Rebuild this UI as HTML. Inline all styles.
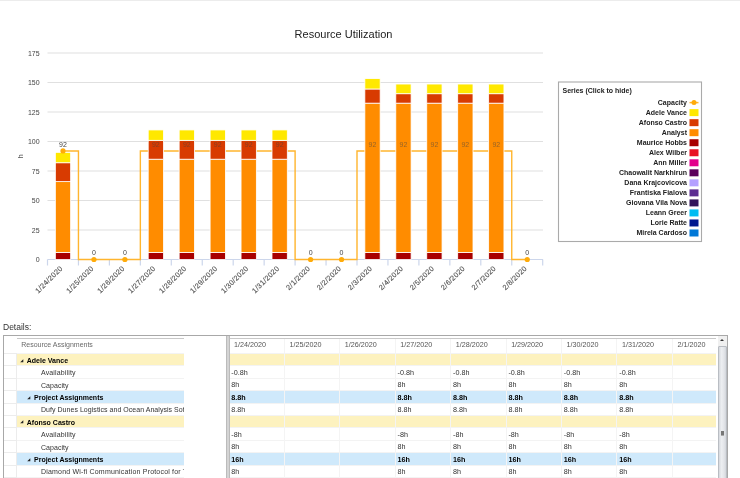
<!DOCTYPE html>
<html><head><meta charset="utf-8"><style>
html,body{margin:0;padding:0;background:#fff;width:740px;height:478px;overflow:hidden;position:relative}
</style></head><body><div style="position:absolute;left:0;top:0;width:740px;height:478px;will-change:transform;overflow:hidden">
<div style="position:absolute;left:0;top:0;width:740px;height:1px;background:#ececec"></div>
<svg width="740" height="300" style="position:absolute;left:0;top:0">
<line x1="47.5" x2="543" y1="230.00" y2="230.00" stroke="#e0e0e0" stroke-width="1.2"/>
<line x1="47.5" x2="543" y1="200.50" y2="200.50" stroke="#e0e0e0" stroke-width="1.2"/>
<line x1="47.5" x2="543" y1="171.00" y2="171.00" stroke="#e0e0e0" stroke-width="1.2"/>
<line x1="47.5" x2="543" y1="141.50" y2="141.50" stroke="#e0e0e0" stroke-width="1.2"/>
<line x1="47.5" x2="543" y1="112.00" y2="112.00" stroke="#e0e0e0" stroke-width="1.2"/>
<line x1="47.5" x2="543" y1="82.50" y2="82.50" stroke="#e0e0e0" stroke-width="1.2"/>
<line x1="47.5" x2="543" y1="53.00" y2="53.00" stroke="#e0e0e0" stroke-width="1.2"/>
<text x="39.6" y="262.20" text-anchor="end" font-family="'Liberation Sans', sans-serif" font-size="7" fill="#444">0</text>
<text x="39.6" y="232.70" text-anchor="end" font-family="'Liberation Sans', sans-serif" font-size="7" fill="#444">25</text>
<text x="39.6" y="203.20" text-anchor="end" font-family="'Liberation Sans', sans-serif" font-size="7" fill="#444">50</text>
<text x="39.6" y="173.70" text-anchor="end" font-family="'Liberation Sans', sans-serif" font-size="7" fill="#444">75</text>
<text x="39.6" y="144.20" text-anchor="end" font-family="'Liberation Sans', sans-serif" font-size="7" fill="#444">100</text>
<text x="39.6" y="114.70" text-anchor="end" font-family="'Liberation Sans', sans-serif" font-size="7" fill="#444">125</text>
<text x="39.6" y="85.20" text-anchor="end" font-family="'Liberation Sans', sans-serif" font-size="7" fill="#444">150</text>
<text x="39.6" y="55.70" text-anchor="end" font-family="'Liberation Sans', sans-serif" font-size="7" fill="#444">175</text>
<text x="0" y="0" transform="translate(22.6,156.3) rotate(-90)" text-anchor="middle" font-family="'Liberation Sans', sans-serif" font-size="7.6" fill="#555">h</text>
<text x="343.5" y="37.8" text-anchor="middle" font-family="'Liberation Sans', sans-serif" font-size="11" fill="#222">Resource Utilization</text>
<line x1="47.5" x2="543" y1="259.5" y2="259.5" stroke="#ccd6eb" stroke-width="1.2"/>
<line x1="47.50" x2="47.50" y1="259.5" y2="265.5" stroke="#ccd6eb" stroke-width="1.2"/>
<line x1="78.45" x2="78.45" y1="259.5" y2="265.5" stroke="#ccd6eb" stroke-width="1.2"/>
<line x1="109.40" x2="109.40" y1="259.5" y2="265.5" stroke="#ccd6eb" stroke-width="1.2"/>
<line x1="140.35" x2="140.35" y1="259.5" y2="265.5" stroke="#ccd6eb" stroke-width="1.2"/>
<line x1="171.30" x2="171.30" y1="259.5" y2="265.5" stroke="#ccd6eb" stroke-width="1.2"/>
<line x1="202.25" x2="202.25" y1="259.5" y2="265.5" stroke="#ccd6eb" stroke-width="1.2"/>
<line x1="233.20" x2="233.20" y1="259.5" y2="265.5" stroke="#ccd6eb" stroke-width="1.2"/>
<line x1="264.15" x2="264.15" y1="259.5" y2="265.5" stroke="#ccd6eb" stroke-width="1.2"/>
<line x1="295.10" x2="295.10" y1="259.5" y2="265.5" stroke="#ccd6eb" stroke-width="1.2"/>
<line x1="326.05" x2="326.05" y1="259.5" y2="265.5" stroke="#ccd6eb" stroke-width="1.2"/>
<line x1="357.00" x2="357.00" y1="259.5" y2="265.5" stroke="#ccd6eb" stroke-width="1.2"/>
<line x1="387.95" x2="387.95" y1="259.5" y2="265.5" stroke="#ccd6eb" stroke-width="1.2"/>
<line x1="418.90" x2="418.90" y1="259.5" y2="265.5" stroke="#ccd6eb" stroke-width="1.2"/>
<line x1="449.85" x2="449.85" y1="259.5" y2="265.5" stroke="#ccd6eb" stroke-width="1.2"/>
<line x1="480.80" x2="480.80" y1="259.5" y2="265.5" stroke="#ccd6eb" stroke-width="1.2"/>
<line x1="511.75" x2="511.75" y1="259.5" y2="265.5" stroke="#ccd6eb" stroke-width="1.2"/>
<line x1="542.70" x2="542.70" y1="259.5" y2="265.5" stroke="#ccd6eb" stroke-width="1.2"/>
<path d="M63.00 150.94 L78.45 150.94 L78.45 259.50 L109.40 259.50 L109.40 259.50 L140.35 259.50 L140.35 150.94 L171.30 150.94 L171.30 150.94 L202.25 150.94 L202.25 150.94 L233.20 150.94 L233.20 150.94 L264.15 150.94 L264.15 150.94 L295.10 150.94 L295.10 259.50 L326.05 259.50 L326.05 259.50 L357.00 259.50 L357.00 150.94 L387.95 150.94 L387.95 150.94 L418.90 150.94 L418.90 150.94 L449.85 150.94 L449.85 150.94 L480.80 150.94 L480.80 150.94 L511.75 150.94 L511.75 259.50 L527.25 259.50" fill="none" stroke="#ffb52e" stroke-width="1.4"/>
<rect x="55.35" y="252.42" width="15.3" height="7.08" fill="#a80000" stroke="#fff" stroke-width="0.8"/>
<rect x="55.35" y="181.62" width="15.3" height="70.80" fill="#ff8c00" stroke="#fff" stroke-width="0.8"/>
<rect x="55.35" y="162.74" width="15.3" height="18.88" fill="#d83b01" stroke="#fff" stroke-width="0.8"/>
<rect x="55.35" y="152.36" width="15.3" height="10.38" fill="#ffe800" stroke="#fff" stroke-width="0.8"/>
<rect x="148.20" y="252.42" width="15.3" height="7.08" fill="#a80000" stroke="#fff" stroke-width="0.8"/>
<rect x="148.20" y="159.20" width="15.3" height="93.22" fill="#ff8c00" stroke="#fff" stroke-width="0.8"/>
<rect x="148.20" y="140.32" width="15.3" height="18.88" fill="#d83b01" stroke="#fff" stroke-width="0.8"/>
<rect x="148.20" y="129.94" width="15.3" height="10.38" fill="#ffe800" stroke="#fff" stroke-width="0.8"/>
<rect x="179.15" y="252.42" width="15.3" height="7.08" fill="#a80000" stroke="#fff" stroke-width="0.8"/>
<rect x="179.15" y="159.20" width="15.3" height="93.22" fill="#ff8c00" stroke="#fff" stroke-width="0.8"/>
<rect x="179.15" y="140.32" width="15.3" height="18.88" fill="#d83b01" stroke="#fff" stroke-width="0.8"/>
<rect x="179.15" y="129.94" width="15.3" height="10.38" fill="#ffe800" stroke="#fff" stroke-width="0.8"/>
<rect x="210.10" y="252.42" width="15.3" height="7.08" fill="#a80000" stroke="#fff" stroke-width="0.8"/>
<rect x="210.10" y="159.20" width="15.3" height="93.22" fill="#ff8c00" stroke="#fff" stroke-width="0.8"/>
<rect x="210.10" y="140.32" width="15.3" height="18.88" fill="#d83b01" stroke="#fff" stroke-width="0.8"/>
<rect x="210.10" y="129.94" width="15.3" height="10.38" fill="#ffe800" stroke="#fff" stroke-width="0.8"/>
<rect x="241.05" y="252.42" width="15.3" height="7.08" fill="#a80000" stroke="#fff" stroke-width="0.8"/>
<rect x="241.05" y="159.20" width="15.3" height="93.22" fill="#ff8c00" stroke="#fff" stroke-width="0.8"/>
<rect x="241.05" y="140.32" width="15.3" height="18.88" fill="#d83b01" stroke="#fff" stroke-width="0.8"/>
<rect x="241.05" y="129.94" width="15.3" height="10.38" fill="#ffe800" stroke="#fff" stroke-width="0.8"/>
<rect x="272.00" y="252.42" width="15.3" height="7.08" fill="#a80000" stroke="#fff" stroke-width="0.8"/>
<rect x="272.00" y="159.20" width="15.3" height="93.22" fill="#ff8c00" stroke="#fff" stroke-width="0.8"/>
<rect x="272.00" y="140.32" width="15.3" height="18.88" fill="#d83b01" stroke="#fff" stroke-width="0.8"/>
<rect x="272.00" y="129.94" width="15.3" height="10.38" fill="#ffe800" stroke="#fff" stroke-width="0.8"/>
<rect x="364.85" y="252.42" width="15.3" height="7.08" fill="#a80000" stroke="#fff" stroke-width="0.8"/>
<rect x="364.85" y="103.15" width="15.3" height="149.27" fill="#ff8c00" stroke="#fff" stroke-width="0.8"/>
<rect x="364.85" y="88.99" width="15.3" height="14.16" fill="#d83b01" stroke="#fff" stroke-width="0.8"/>
<rect x="364.85" y="78.61" width="15.3" height="10.38" fill="#ffe800" stroke="#fff" stroke-width="0.8"/>
<rect x="395.80" y="252.42" width="15.3" height="7.08" fill="#a80000" stroke="#fff" stroke-width="0.8"/>
<rect x="395.80" y="103.15" width="15.3" height="149.27" fill="#ff8c00" stroke="#fff" stroke-width="0.8"/>
<rect x="395.80" y="93.71" width="15.3" height="9.44" fill="#d83b01" stroke="#fff" stroke-width="0.8"/>
<rect x="395.80" y="84.03" width="15.3" height="9.68" fill="#ffe800" stroke="#fff" stroke-width="0.8"/>
<rect x="426.75" y="252.42" width="15.3" height="7.08" fill="#a80000" stroke="#fff" stroke-width="0.8"/>
<rect x="426.75" y="103.15" width="15.3" height="149.27" fill="#ff8c00" stroke="#fff" stroke-width="0.8"/>
<rect x="426.75" y="93.71" width="15.3" height="9.44" fill="#d83b01" stroke="#fff" stroke-width="0.8"/>
<rect x="426.75" y="84.03" width="15.3" height="9.68" fill="#ffe800" stroke="#fff" stroke-width="0.8"/>
<rect x="457.70" y="252.42" width="15.3" height="7.08" fill="#a80000" stroke="#fff" stroke-width="0.8"/>
<rect x="457.70" y="103.15" width="15.3" height="149.27" fill="#ff8c00" stroke="#fff" stroke-width="0.8"/>
<rect x="457.70" y="93.71" width="15.3" height="9.44" fill="#d83b01" stroke="#fff" stroke-width="0.8"/>
<rect x="457.70" y="84.03" width="15.3" height="9.68" fill="#ffe800" stroke="#fff" stroke-width="0.8"/>
<rect x="488.65" y="252.42" width="15.3" height="7.08" fill="#a80000" stroke="#fff" stroke-width="0.8"/>
<rect x="488.65" y="103.15" width="15.3" height="149.27" fill="#ff8c00" stroke="#fff" stroke-width="0.8"/>
<rect x="488.65" y="93.71" width="15.3" height="9.44" fill="#d83b01" stroke="#fff" stroke-width="0.8"/>
<rect x="488.65" y="84.03" width="15.3" height="9.68" fill="#ffe800" stroke="#fff" stroke-width="0.8"/>
<circle cx="63.00" cy="150.94" r="2.6" fill="#ffab0a"/>
<circle cx="93.95" cy="259.50" r="2.6" fill="#ffab0a"/>
<circle cx="124.90" cy="259.50" r="2.6" fill="#ffab0a"/>
<circle cx="310.60" cy="259.50" r="2.6" fill="#ffab0a"/>
<circle cx="341.55" cy="259.50" r="2.6" fill="#ffab0a"/>
<circle cx="527.25" cy="259.50" r="2.6" fill="#ffab0a"/>
<text x="63.00" y="146.74" text-anchor="middle" font-family="'Liberation Sans', sans-serif" font-size="7" fill="#444" fill-opacity="1">92</text>
<text x="93.95" y="255.30" text-anchor="middle" font-family="'Liberation Sans', sans-serif" font-size="7" fill="#444" fill-opacity="1">0</text>
<text x="124.90" y="255.30" text-anchor="middle" font-family="'Liberation Sans', sans-serif" font-size="7" fill="#444" fill-opacity="1">0</text>
<text x="155.85" y="146.74" text-anchor="middle" font-family="'Liberation Sans', sans-serif" font-size="7" fill="#444" fill-opacity="0.55">92</text>
<text x="186.80" y="146.74" text-anchor="middle" font-family="'Liberation Sans', sans-serif" font-size="7" fill="#444" fill-opacity="0.55">92</text>
<text x="217.75" y="146.74" text-anchor="middle" font-family="'Liberation Sans', sans-serif" font-size="7" fill="#444" fill-opacity="0.55">92</text>
<text x="248.70" y="146.74" text-anchor="middle" font-family="'Liberation Sans', sans-serif" font-size="7" fill="#444" fill-opacity="0.55">92</text>
<text x="279.65" y="146.74" text-anchor="middle" font-family="'Liberation Sans', sans-serif" font-size="7" fill="#444" fill-opacity="0.55">92</text>
<text x="310.60" y="255.30" text-anchor="middle" font-family="'Liberation Sans', sans-serif" font-size="7" fill="#444" fill-opacity="1">0</text>
<text x="341.55" y="255.30" text-anchor="middle" font-family="'Liberation Sans', sans-serif" font-size="7" fill="#444" fill-opacity="1">0</text>
<text x="372.50" y="146.74" text-anchor="middle" font-family="'Liberation Sans', sans-serif" font-size="7" fill="#444" fill-opacity="0.55">92</text>
<text x="403.45" y="146.74" text-anchor="middle" font-family="'Liberation Sans', sans-serif" font-size="7" fill="#444" fill-opacity="0.55">92</text>
<text x="434.40" y="146.74" text-anchor="middle" font-family="'Liberation Sans', sans-serif" font-size="7" fill="#444" fill-opacity="0.55">92</text>
<text x="465.35" y="146.74" text-anchor="middle" font-family="'Liberation Sans', sans-serif" font-size="7" fill="#444" fill-opacity="0.55">92</text>
<text x="496.30" y="146.74" text-anchor="middle" font-family="'Liberation Sans', sans-serif" font-size="7" fill="#444" fill-opacity="0.55">92</text>
<text x="527.25" y="255.30" text-anchor="middle" font-family="'Liberation Sans', sans-serif" font-size="7" fill="#444" fill-opacity="1">0</text>
<text x="0" y="0" transform="translate(63.10,268.80) rotate(-45)" text-anchor="end" font-family="'Liberation Sans', sans-serif" font-size="7.3" letter-spacing="0.3" fill="#555" stroke="#555" stroke-width="0.15">1/24/2020</text>
<text x="0" y="0" transform="translate(94.05,268.80) rotate(-45)" text-anchor="end" font-family="'Liberation Sans', sans-serif" font-size="7.3" letter-spacing="0.3" fill="#555" stroke="#555" stroke-width="0.15">1/25/2020</text>
<text x="0" y="0" transform="translate(125.00,268.80) rotate(-45)" text-anchor="end" font-family="'Liberation Sans', sans-serif" font-size="7.3" letter-spacing="0.3" fill="#555" stroke="#555" stroke-width="0.15">1/26/2020</text>
<text x="0" y="0" transform="translate(155.95,268.80) rotate(-45)" text-anchor="end" font-family="'Liberation Sans', sans-serif" font-size="7.3" letter-spacing="0.3" fill="#555" stroke="#555" stroke-width="0.15">1/27/2020</text>
<text x="0" y="0" transform="translate(186.90,268.80) rotate(-45)" text-anchor="end" font-family="'Liberation Sans', sans-serif" font-size="7.3" letter-spacing="0.3" fill="#555" stroke="#555" stroke-width="0.15">1/28/2020</text>
<text x="0" y="0" transform="translate(217.85,268.80) rotate(-45)" text-anchor="end" font-family="'Liberation Sans', sans-serif" font-size="7.3" letter-spacing="0.3" fill="#555" stroke="#555" stroke-width="0.15">1/29/2020</text>
<text x="0" y="0" transform="translate(248.80,268.80) rotate(-45)" text-anchor="end" font-family="'Liberation Sans', sans-serif" font-size="7.3" letter-spacing="0.3" fill="#555" stroke="#555" stroke-width="0.15">1/30/2020</text>
<text x="0" y="0" transform="translate(279.75,268.80) rotate(-45)" text-anchor="end" font-family="'Liberation Sans', sans-serif" font-size="7.3" letter-spacing="0.3" fill="#555" stroke="#555" stroke-width="0.15">1/31/2020</text>
<text x="0" y="0" transform="translate(310.70,268.80) rotate(-45)" text-anchor="end" font-family="'Liberation Sans', sans-serif" font-size="7.3" letter-spacing="0.3" fill="#555" stroke="#555" stroke-width="0.15">2/1/2020</text>
<text x="0" y="0" transform="translate(341.65,268.80) rotate(-45)" text-anchor="end" font-family="'Liberation Sans', sans-serif" font-size="7.3" letter-spacing="0.3" fill="#555" stroke="#555" stroke-width="0.15">2/2/2020</text>
<text x="0" y="0" transform="translate(372.60,268.80) rotate(-45)" text-anchor="end" font-family="'Liberation Sans', sans-serif" font-size="7.3" letter-spacing="0.3" fill="#555" stroke="#555" stroke-width="0.15">2/3/2020</text>
<text x="0" y="0" transform="translate(403.55,268.80) rotate(-45)" text-anchor="end" font-family="'Liberation Sans', sans-serif" font-size="7.3" letter-spacing="0.3" fill="#555" stroke="#555" stroke-width="0.15">2/4/2020</text>
<text x="0" y="0" transform="translate(434.50,268.80) rotate(-45)" text-anchor="end" font-family="'Liberation Sans', sans-serif" font-size="7.3" letter-spacing="0.3" fill="#555" stroke="#555" stroke-width="0.15">2/5/2020</text>
<text x="0" y="0" transform="translate(465.45,268.80) rotate(-45)" text-anchor="end" font-family="'Liberation Sans', sans-serif" font-size="7.3" letter-spacing="0.3" fill="#555" stroke="#555" stroke-width="0.15">2/6/2020</text>
<text x="0" y="0" transform="translate(496.40,268.80) rotate(-45)" text-anchor="end" font-family="'Liberation Sans', sans-serif" font-size="7.3" letter-spacing="0.3" fill="#555" stroke="#555" stroke-width="0.15">2/7/2020</text>
<text x="0" y="0" transform="translate(527.35,268.80) rotate(-45)" text-anchor="end" font-family="'Liberation Sans', sans-serif" font-size="7.3" letter-spacing="0.3" fill="#555" stroke="#555" stroke-width="0.15">2/8/2020</text>
<rect x="558.5" y="82" width="143" height="159.5" fill="#fff" stroke="#aaa" stroke-width="1.1"/>
<text x="562.5" y="93" font-family="'Liberation Sans', sans-serif" font-size="7" font-weight="bold" fill="#222">Series (Click to hide)</text>
<text x="687" y="105.10" text-anchor="end" font-family="'Liberation Sans', sans-serif" font-size="7" font-weight="bold" fill="#222">Capacity</text>
<line x1="689.5" x2="698.5" y1="102.60" y2="102.60" stroke="#ffb52e" stroke-width="1.5"/>
<circle cx="694" cy="102.60" r="2.5" fill="#ffab0a"/>
<text x="687" y="115.13" text-anchor="end" font-family="'Liberation Sans', sans-serif" font-size="7" font-weight="bold" fill="#222">Adele Vance</text>
<rect x="689.5" y="109.13" width="9" height="7" fill="#ffe800"/>
<text x="687" y="125.16" text-anchor="end" font-family="'Liberation Sans', sans-serif" font-size="7" font-weight="bold" fill="#222">Afonso Castro</text>
<rect x="689.5" y="119.16" width="9" height="7" fill="#d83b01"/>
<text x="687" y="135.19" text-anchor="end" font-family="'Liberation Sans', sans-serif" font-size="7" font-weight="bold" fill="#222">Analyst</text>
<rect x="689.5" y="129.19" width="9" height="7" fill="#ff8c00"/>
<text x="687" y="145.22" text-anchor="end" font-family="'Liberation Sans', sans-serif" font-size="7" font-weight="bold" fill="#222">Maurice Hobbs</text>
<rect x="689.5" y="139.22" width="9" height="7" fill="#a80000"/>
<text x="687" y="155.25" text-anchor="end" font-family="'Liberation Sans', sans-serif" font-size="7" font-weight="bold" fill="#222">Alex Wilber</text>
<rect x="689.5" y="149.25" width="9" height="7" fill="#e81123"/>
<text x="687" y="165.28" text-anchor="end" font-family="'Liberation Sans', sans-serif" font-size="7" font-weight="bold" fill="#222">Ann Miller</text>
<rect x="689.5" y="159.28" width="9" height="7" fill="#e3008c"/>
<text x="687" y="175.31" text-anchor="end" font-family="'Liberation Sans', sans-serif" font-size="7" font-weight="bold" fill="#222">Chaowalit Narkhirun</text>
<rect x="689.5" y="169.31" width="9" height="7" fill="#5c005c"/>
<text x="687" y="185.34" text-anchor="end" font-family="'Liberation Sans', sans-serif" font-size="7" font-weight="bold" fill="#222">Dana Krajcovicova</text>
<rect x="689.5" y="179.34" width="9" height="7" fill="#b4a0ff"/>
<text x="687" y="195.37" text-anchor="end" font-family="'Liberation Sans', sans-serif" font-size="7" font-weight="bold" fill="#222">Frantiska Fialova</text>
<rect x="689.5" y="189.37" width="9" height="7" fill="#5c2d91"/>
<text x="687" y="205.40" text-anchor="end" font-family="'Liberation Sans', sans-serif" font-size="7" font-weight="bold" fill="#222">Giovana Vila Nova</text>
<rect x="689.5" y="199.40" width="9" height="7" fill="#32145a"/>
<text x="687" y="215.43" text-anchor="end" font-family="'Liberation Sans', sans-serif" font-size="7" font-weight="bold" fill="#222">Leann Greer</text>
<rect x="689.5" y="209.43" width="9" height="7" fill="#00bcf2"/>
<text x="687" y="225.46" text-anchor="end" font-family="'Liberation Sans', sans-serif" font-size="7" font-weight="bold" fill="#222">Lorie Ratte</text>
<rect x="689.5" y="219.46" width="9" height="7" fill="#00188f"/>
<text x="687" y="235.49" text-anchor="end" font-family="'Liberation Sans', sans-serif" font-size="7" font-weight="bold" fill="#222">Mirela Cardoso</text>
<rect x="689.5" y="229.49" width="9" height="7" fill="#0078d7"/>
</svg>
<div style="position:absolute;left:3px;top:321.9px;font-family:'Liberation Sans', sans-serif;font-size:8.5px;color:#333;">Details:</div>
<div style="position:absolute;left:2.7px;top:334.9px;width:725.5px;height:150px;border:1.5px solid #a8a8a8;box-sizing:border-box;"></div>
<div style="position:absolute;left:4.2px;top:336.4px;width:722.5px;height:145px;overflow:hidden;">
<div style="position:absolute;left:0px;top:16.80px;width:12.70px;height:1px;background:#ececec"></div>
<div style="position:absolute;left:12.70px;top:16.80px;width:167.10px;height:1px;background:#f3f3f3"></div>
<div style="position:absolute;left:224.80px;top:16.80px;width:487.30px;height:1px;background:#f3f3f3"></div>
<div style="position:absolute;left:17.10px;top:3.65px;width:160px;line-height:10px;font-family:'Liberation Sans', sans-serif;font-size:7px;color:#6a6a6a;white-space:nowrap">Resource Assignments</div>
<div style="position:absolute;left:229.80px;top:3.65px;line-height:10px;font-family:'Liberation Sans', sans-serif;font-size:7.2px;color:#555;white-space:nowrap">1/24/2020</div>
<div style="position:absolute;left:285.23px;top:3.65px;line-height:10px;font-family:'Liberation Sans', sans-serif;font-size:7.2px;color:#555;white-space:nowrap">1/25/2020</div>
<div style="position:absolute;left:340.66px;top:3.65px;line-height:10px;font-family:'Liberation Sans', sans-serif;font-size:7.2px;color:#555;white-space:nowrap">1/26/2020</div>
<div style="position:absolute;left:396.09px;top:3.65px;line-height:10px;font-family:'Liberation Sans', sans-serif;font-size:7.2px;color:#555;white-space:nowrap">1/27/2020</div>
<div style="position:absolute;left:451.52px;top:3.65px;line-height:10px;font-family:'Liberation Sans', sans-serif;font-size:7.2px;color:#555;white-space:nowrap">1/28/2020</div>
<div style="position:absolute;left:506.95px;top:3.65px;line-height:10px;font-family:'Liberation Sans', sans-serif;font-size:7.2px;color:#555;white-space:nowrap">1/29/2020</div>
<div style="position:absolute;left:562.38px;top:3.65px;line-height:10px;font-family:'Liberation Sans', sans-serif;font-size:7.2px;color:#555;white-space:nowrap">1/30/2020</div>
<div style="position:absolute;left:617.81px;top:3.65px;line-height:10px;font-family:'Liberation Sans', sans-serif;font-size:7.2px;color:#555;white-space:nowrap">1/31/2020</div>
<div style="position:absolute;left:673.24px;top:3.65px;line-height:10px;font-family:'Liberation Sans', sans-serif;font-size:7.2px;color:#555;white-space:nowrap">2/1/2020</div>
<div style="position:absolute;left:12.70px;top:17.30px;width:167.10px;height:12.30px;background:#fdf2bf"></div>
<div style="position:absolute;left:224.80px;top:17.30px;width:487.30px;height:12.30px;background:#fdf2bf"></div>
<div style="position:absolute;left:0px;top:29.10px;width:12.70px;height:1px;background:#ececec"></div>
<div style="position:absolute;left:12.70px;top:29.10px;width:167.10px;height:1px;background:#f3f3f3"></div>
<div style="position:absolute;left:224.80px;top:29.10px;width:487.30px;height:1px;background:#f3f3f3"></div>
<svg style="position:absolute;left:16.20px;top:22.15px" width="4" height="4"><path d="M3.3 0.2 L3.3 3.3 L0.2 3.3 Z" fill="#222"/></svg>
<div style="position:absolute;left:22.60px;top:19.85px;line-height:10px;font-family:'Liberation Sans', sans-serif;font-size:7px;font-weight:bold;color:#000;white-space:nowrap">Adele Vance</div>
<div style="position:absolute;left:0px;top:41.50px;width:12.70px;height:1px;background:#ececec"></div>
<div style="position:absolute;left:12.70px;top:41.50px;width:167.10px;height:1px;background:#f3f3f3"></div>
<div style="position:absolute;left:224.80px;top:41.50px;width:487.30px;height:1px;background:#f3f3f3"></div>
<div style="position:absolute;left:36.80px;top:31.80px;width:143.00px;overflow:hidden;line-height:10px;font-family:'Liberation Sans', sans-serif;font-size:7px;letter-spacing:0.14px;color:#333;white-space:nowrap">Availability</div>
<div style="position:absolute;left:227.10px;top:31.60px;line-height:10px;font-family:'Liberation Sans', sans-serif;font-size:7.2px;font-weight:normal;color:#333;white-space:nowrap">-0.8h</div>
<div style="position:absolute;left:393.39px;top:31.60px;line-height:10px;font-family:'Liberation Sans', sans-serif;font-size:7.2px;font-weight:normal;color:#333;white-space:nowrap">-0.8h</div>
<div style="position:absolute;left:448.82px;top:31.60px;line-height:10px;font-family:'Liberation Sans', sans-serif;font-size:7.2px;font-weight:normal;color:#333;white-space:nowrap">-0.8h</div>
<div style="position:absolute;left:504.25px;top:31.60px;line-height:10px;font-family:'Liberation Sans', sans-serif;font-size:7.2px;font-weight:normal;color:#333;white-space:nowrap">-0.8h</div>
<div style="position:absolute;left:559.68px;top:31.60px;line-height:10px;font-family:'Liberation Sans', sans-serif;font-size:7.2px;font-weight:normal;color:#333;white-space:nowrap">-0.8h</div>
<div style="position:absolute;left:615.11px;top:31.60px;line-height:10px;font-family:'Liberation Sans', sans-serif;font-size:7.2px;font-weight:normal;color:#333;white-space:nowrap">-0.8h</div>
<div style="position:absolute;left:0px;top:54.00px;width:12.70px;height:1px;background:#ececec"></div>
<div style="position:absolute;left:12.70px;top:54.00px;width:167.10px;height:1px;background:#f3f3f3"></div>
<div style="position:absolute;left:224.80px;top:54.00px;width:487.30px;height:1px;background:#f3f3f3"></div>
<div style="position:absolute;left:36.80px;top:44.25px;width:143.00px;overflow:hidden;line-height:10px;font-family:'Liberation Sans', sans-serif;font-size:7px;letter-spacing:0.04px;color:#333;white-space:nowrap">Capacity</div>
<div style="position:absolute;left:227.10px;top:44.05px;line-height:10px;font-family:'Liberation Sans', sans-serif;font-size:7.2px;font-weight:normal;color:#333;white-space:nowrap">8h</div>
<div style="position:absolute;left:393.39px;top:44.05px;line-height:10px;font-family:'Liberation Sans', sans-serif;font-size:7.2px;font-weight:normal;color:#333;white-space:nowrap">8h</div>
<div style="position:absolute;left:448.82px;top:44.05px;line-height:10px;font-family:'Liberation Sans', sans-serif;font-size:7.2px;font-weight:normal;color:#333;white-space:nowrap">8h</div>
<div style="position:absolute;left:504.25px;top:44.05px;line-height:10px;font-family:'Liberation Sans', sans-serif;font-size:7.2px;font-weight:normal;color:#333;white-space:nowrap">8h</div>
<div style="position:absolute;left:559.68px;top:44.05px;line-height:10px;font-family:'Liberation Sans', sans-serif;font-size:7.2px;font-weight:normal;color:#333;white-space:nowrap">8h</div>
<div style="position:absolute;left:615.11px;top:44.05px;line-height:10px;font-family:'Liberation Sans', sans-serif;font-size:7.2px;font-weight:normal;color:#333;white-space:nowrap">8h</div>
<div style="position:absolute;left:12.70px;top:54.50px;width:167.10px;height:12.30px;background:#cfe9fb"></div>
<div style="position:absolute;left:224.80px;top:54.50px;width:487.30px;height:12.30px;background:#cfe9fb"></div>
<div style="position:absolute;left:0px;top:66.30px;width:12.70px;height:1px;background:#ececec"></div>
<div style="position:absolute;left:12.70px;top:66.30px;width:167.10px;height:1px;background:#f3f3f3"></div>
<div style="position:absolute;left:224.80px;top:66.30px;width:487.30px;height:1px;background:#f3f3f3"></div>
<svg style="position:absolute;left:23.20px;top:59.35px" width="4" height="4"><path d="M3.3 0.2 L3.3 3.3 L0.2 3.3 Z" fill="#222"/></svg>
<div style="position:absolute;left:29.80px;top:57.05px;line-height:10px;font-family:'Liberation Sans', sans-serif;font-size:7px;font-weight:bold;color:#000;white-space:nowrap">Project Assignments</div>
<div style="position:absolute;left:227.10px;top:56.45px;line-height:10px;font-family:'Liberation Sans', sans-serif;font-size:7.2px;font-weight:bold;color:#000;white-space:nowrap">8.8h</div>
<div style="position:absolute;left:393.39px;top:56.45px;line-height:10px;font-family:'Liberation Sans', sans-serif;font-size:7.2px;font-weight:bold;color:#000;white-space:nowrap">8.8h</div>
<div style="position:absolute;left:448.82px;top:56.45px;line-height:10px;font-family:'Liberation Sans', sans-serif;font-size:7.2px;font-weight:bold;color:#000;white-space:nowrap">8.8h</div>
<div style="position:absolute;left:504.25px;top:56.45px;line-height:10px;font-family:'Liberation Sans', sans-serif;font-size:7.2px;font-weight:bold;color:#000;white-space:nowrap">8.8h</div>
<div style="position:absolute;left:559.68px;top:56.45px;line-height:10px;font-family:'Liberation Sans', sans-serif;font-size:7.2px;font-weight:bold;color:#000;white-space:nowrap">8.8h</div>
<div style="position:absolute;left:615.11px;top:56.45px;line-height:10px;font-family:'Liberation Sans', sans-serif;font-size:7.2px;font-weight:bold;color:#000;white-space:nowrap">8.8h</div>
<div style="position:absolute;left:0px;top:78.70px;width:12.70px;height:1px;background:#ececec"></div>
<div style="position:absolute;left:12.70px;top:78.70px;width:167.10px;height:1px;background:#f3f3f3"></div>
<div style="position:absolute;left:224.80px;top:78.70px;width:487.30px;height:1px;background:#f3f3f3"></div>
<div style="position:absolute;left:36.80px;top:69.00px;width:143.00px;overflow:hidden;line-height:10px;font-family:'Liberation Sans', sans-serif;font-size:7px;letter-spacing:0.04px;color:#333;white-space:nowrap">Dufy Dunes Logistics and Ocean Analysis Software</div>
<div style="position:absolute;left:227.10px;top:68.80px;line-height:10px;font-family:'Liberation Sans', sans-serif;font-size:7.2px;font-weight:normal;color:#333;white-space:nowrap">8.8h</div>
<div style="position:absolute;left:393.39px;top:68.80px;line-height:10px;font-family:'Liberation Sans', sans-serif;font-size:7.2px;font-weight:normal;color:#333;white-space:nowrap">8.8h</div>
<div style="position:absolute;left:448.82px;top:68.80px;line-height:10px;font-family:'Liberation Sans', sans-serif;font-size:7.2px;font-weight:normal;color:#333;white-space:nowrap">8.8h</div>
<div style="position:absolute;left:504.25px;top:68.80px;line-height:10px;font-family:'Liberation Sans', sans-serif;font-size:7.2px;font-weight:normal;color:#333;white-space:nowrap">8.8h</div>
<div style="position:absolute;left:559.68px;top:68.80px;line-height:10px;font-family:'Liberation Sans', sans-serif;font-size:7.2px;font-weight:normal;color:#333;white-space:nowrap">8.8h</div>
<div style="position:absolute;left:615.11px;top:68.80px;line-height:10px;font-family:'Liberation Sans', sans-serif;font-size:7.2px;font-weight:normal;color:#333;white-space:nowrap">8.8h</div>
<div style="position:absolute;left:12.70px;top:79.20px;width:167.10px;height:12.40px;background:#fdf2bf"></div>
<div style="position:absolute;left:224.80px;top:79.20px;width:487.30px;height:12.40px;background:#fdf2bf"></div>
<div style="position:absolute;left:0px;top:91.10px;width:12.70px;height:1px;background:#ececec"></div>
<div style="position:absolute;left:12.70px;top:91.10px;width:167.10px;height:1px;background:#f3f3f3"></div>
<div style="position:absolute;left:224.80px;top:91.10px;width:487.30px;height:1px;background:#f3f3f3"></div>
<svg style="position:absolute;left:16.20px;top:84.10px" width="4" height="4"><path d="M3.3 0.2 L3.3 3.3 L0.2 3.3 Z" fill="#222"/></svg>
<div style="position:absolute;left:22.60px;top:81.80px;line-height:10px;font-family:'Liberation Sans', sans-serif;font-size:7px;font-weight:bold;color:#000;white-space:nowrap">Afonso Castro</div>
<div style="position:absolute;left:0px;top:103.50px;width:12.70px;height:1px;background:#ececec"></div>
<div style="position:absolute;left:12.70px;top:103.50px;width:167.10px;height:1px;background:#f3f3f3"></div>
<div style="position:absolute;left:224.80px;top:103.50px;width:487.30px;height:1px;background:#f3f3f3"></div>
<div style="position:absolute;left:36.80px;top:93.80px;width:143.00px;overflow:hidden;line-height:10px;font-family:'Liberation Sans', sans-serif;font-size:7px;letter-spacing:0.14px;color:#333;white-space:nowrap">Availability</div>
<div style="position:absolute;left:227.10px;top:93.60px;line-height:10px;font-family:'Liberation Sans', sans-serif;font-size:7.2px;font-weight:normal;color:#333;white-space:nowrap">-8h</div>
<div style="position:absolute;left:393.39px;top:93.60px;line-height:10px;font-family:'Liberation Sans', sans-serif;font-size:7.2px;font-weight:normal;color:#333;white-space:nowrap">-8h</div>
<div style="position:absolute;left:448.82px;top:93.60px;line-height:10px;font-family:'Liberation Sans', sans-serif;font-size:7.2px;font-weight:normal;color:#333;white-space:nowrap">-8h</div>
<div style="position:absolute;left:504.25px;top:93.60px;line-height:10px;font-family:'Liberation Sans', sans-serif;font-size:7.2px;font-weight:normal;color:#333;white-space:nowrap">-8h</div>
<div style="position:absolute;left:559.68px;top:93.60px;line-height:10px;font-family:'Liberation Sans', sans-serif;font-size:7.2px;font-weight:normal;color:#333;white-space:nowrap">-8h</div>
<div style="position:absolute;left:615.11px;top:93.60px;line-height:10px;font-family:'Liberation Sans', sans-serif;font-size:7.2px;font-weight:normal;color:#333;white-space:nowrap">-8h</div>
<div style="position:absolute;left:0px;top:116.00px;width:12.70px;height:1px;background:#ececec"></div>
<div style="position:absolute;left:12.70px;top:116.00px;width:167.10px;height:1px;background:#f3f3f3"></div>
<div style="position:absolute;left:224.80px;top:116.00px;width:487.30px;height:1px;background:#f3f3f3"></div>
<div style="position:absolute;left:36.80px;top:106.25px;width:143.00px;overflow:hidden;line-height:10px;font-family:'Liberation Sans', sans-serif;font-size:7px;letter-spacing:0.04px;color:#333;white-space:nowrap">Capacity</div>
<div style="position:absolute;left:227.10px;top:106.05px;line-height:10px;font-family:'Liberation Sans', sans-serif;font-size:7.2px;font-weight:normal;color:#333;white-space:nowrap">8h</div>
<div style="position:absolute;left:393.39px;top:106.05px;line-height:10px;font-family:'Liberation Sans', sans-serif;font-size:7.2px;font-weight:normal;color:#333;white-space:nowrap">8h</div>
<div style="position:absolute;left:448.82px;top:106.05px;line-height:10px;font-family:'Liberation Sans', sans-serif;font-size:7.2px;font-weight:normal;color:#333;white-space:nowrap">8h</div>
<div style="position:absolute;left:504.25px;top:106.05px;line-height:10px;font-family:'Liberation Sans', sans-serif;font-size:7.2px;font-weight:normal;color:#333;white-space:nowrap">8h</div>
<div style="position:absolute;left:559.68px;top:106.05px;line-height:10px;font-family:'Liberation Sans', sans-serif;font-size:7.2px;font-weight:normal;color:#333;white-space:nowrap">8h</div>
<div style="position:absolute;left:615.11px;top:106.05px;line-height:10px;font-family:'Liberation Sans', sans-serif;font-size:7.2px;font-weight:normal;color:#333;white-space:nowrap">8h</div>
<div style="position:absolute;left:12.70px;top:116.50px;width:167.10px;height:12.40px;background:#cfe9fb"></div>
<div style="position:absolute;left:224.80px;top:116.50px;width:487.30px;height:12.40px;background:#cfe9fb"></div>
<div style="position:absolute;left:0px;top:128.40px;width:12.70px;height:1px;background:#ececec"></div>
<div style="position:absolute;left:12.70px;top:128.40px;width:167.10px;height:1px;background:#f3f3f3"></div>
<div style="position:absolute;left:224.80px;top:128.40px;width:487.30px;height:1px;background:#f3f3f3"></div>
<svg style="position:absolute;left:23.20px;top:121.40px" width="4" height="4"><path d="M3.3 0.2 L3.3 3.3 L0.2 3.3 Z" fill="#222"/></svg>
<div style="position:absolute;left:29.80px;top:119.10px;line-height:10px;font-family:'Liberation Sans', sans-serif;font-size:7px;font-weight:bold;color:#000;white-space:nowrap">Project Assignments</div>
<div style="position:absolute;left:227.10px;top:118.50px;line-height:10px;font-family:'Liberation Sans', sans-serif;font-size:7.2px;font-weight:bold;color:#000;white-space:nowrap">16h</div>
<div style="position:absolute;left:393.39px;top:118.50px;line-height:10px;font-family:'Liberation Sans', sans-serif;font-size:7.2px;font-weight:bold;color:#000;white-space:nowrap">16h</div>
<div style="position:absolute;left:448.82px;top:118.50px;line-height:10px;font-family:'Liberation Sans', sans-serif;font-size:7.2px;font-weight:bold;color:#000;white-space:nowrap">16h</div>
<div style="position:absolute;left:504.25px;top:118.50px;line-height:10px;font-family:'Liberation Sans', sans-serif;font-size:7.2px;font-weight:bold;color:#000;white-space:nowrap">16h</div>
<div style="position:absolute;left:559.68px;top:118.50px;line-height:10px;font-family:'Liberation Sans', sans-serif;font-size:7.2px;font-weight:bold;color:#000;white-space:nowrap">16h</div>
<div style="position:absolute;left:615.11px;top:118.50px;line-height:10px;font-family:'Liberation Sans', sans-serif;font-size:7.2px;font-weight:bold;color:#000;white-space:nowrap">16h</div>
<div style="position:absolute;left:0px;top:140.80px;width:12.70px;height:1px;background:#ececec"></div>
<div style="position:absolute;left:12.70px;top:140.80px;width:167.10px;height:1px;background:#f3f3f3"></div>
<div style="position:absolute;left:224.80px;top:140.80px;width:487.30px;height:1px;background:#f3f3f3"></div>
<div style="position:absolute;left:36.80px;top:131.10px;width:143.00px;overflow:hidden;line-height:10px;font-family:'Liberation Sans', sans-serif;font-size:7px;letter-spacing:0.19px;color:#333;white-space:nowrap">Diamond Wi-fi Communication Protocol for Telemetry</div>
<div style="position:absolute;left:227.10px;top:130.90px;line-height:10px;font-family:'Liberation Sans', sans-serif;font-size:7.2px;font-weight:normal;color:#333;white-space:nowrap">8h</div>
<div style="position:absolute;left:393.39px;top:130.90px;line-height:10px;font-family:'Liberation Sans', sans-serif;font-size:7.2px;font-weight:normal;color:#333;white-space:nowrap">8h</div>
<div style="position:absolute;left:448.82px;top:130.90px;line-height:10px;font-family:'Liberation Sans', sans-serif;font-size:7.2px;font-weight:normal;color:#333;white-space:nowrap">8h</div>
<div style="position:absolute;left:504.25px;top:130.90px;line-height:10px;font-family:'Liberation Sans', sans-serif;font-size:7.2px;font-weight:normal;color:#333;white-space:nowrap">8h</div>
<div style="position:absolute;left:559.68px;top:130.90px;line-height:10px;font-family:'Liberation Sans', sans-serif;font-size:7.2px;font-weight:normal;color:#333;white-space:nowrap">8h</div>
<div style="position:absolute;left:615.11px;top:130.90px;line-height:10px;font-family:'Liberation Sans', sans-serif;font-size:7.2px;font-weight:normal;color:#333;white-space:nowrap">8h</div>
<div style="position:absolute;left:0px;top:153.20px;width:12.70px;height:1px;background:#ececec"></div>
<div style="position:absolute;left:12.70px;top:153.20px;width:167.10px;height:1px;background:#f3f3f3"></div>
<div style="position:absolute;left:224.80px;top:153.20px;width:487.30px;height:1px;background:#f3f3f3"></div>
<div style="position:absolute;left:36.80px;top:143.50px;width:143.00px;overflow:hidden;line-height:10px;font-family:'Liberation Sans', sans-serif;font-size:7px;letter-spacing:0.1px;color:#333;white-space:nowrap"></div>
<div style="position:absolute;left:12.20px;top:16.90px;width:1px;height:200px;background:#ececec"></div>
<div style="position:absolute;left:12.70px;top:1.40px;width:167.10px;height:1.2px;background:#c8c8c8"></div>
<div style="position:absolute;left:224.80px;top:1.40px;width:487.30px;height:1.2px;background:#c8c8c8"></div>
<div style="position:absolute;left:279.73px;top:2.80px;width:1px;height:200px;background:#f4f4f4"></div>
<div style="position:absolute;left:335.16px;top:2.80px;width:1px;height:200px;background:#f4f4f4"></div>
<div style="position:absolute;left:390.59px;top:2.80px;width:1px;height:200px;background:#f4f4f4"></div>
<div style="position:absolute;left:446.02px;top:2.80px;width:1px;height:200px;background:#f4f4f4"></div>
<div style="position:absolute;left:501.45px;top:2.80px;width:1px;height:200px;background:#f4f4f4"></div>
<div style="position:absolute;left:556.88px;top:2.80px;width:1px;height:200px;background:#f4f4f4"></div>
<div style="position:absolute;left:612.31px;top:2.80px;width:1px;height:200px;background:#f4f4f4"></div>
<div style="position:absolute;left:667.74px;top:2.80px;width:1px;height:200px;background:#f4f4f4"></div>
<div style="position:absolute;left:222.00px;top:0px;width:3.6px;height:200px;background:#d4d4d4;border-left:0.6px solid #bbb;border-right:0.6px solid #bbb;box-sizing:border-box"></div>
<div style="position:absolute;left:713.60px;top:0px;width:10px;height:200px;background:#f0f0f0"></div>
<div style="position:absolute;left:715.50px;top:3.10px;width:0;height:0;border-left:2.5px solid transparent;border-right:2.5px solid transparent;border-bottom:2.5px solid #333"></div>
<div style="position:absolute;left:713.60px;top:9.40px;width:9.5px;height:200px;background:linear-gradient(90deg,#d6d9de,#eceef1 35%,#e4e6ea 70%,#d3d6db);border:0.8px solid #b9bdc3;box-sizing:border-box;border-radius:1px"></div>
<div style="position:absolute;left:716.40px;top:94.60px;width:3.4px;height:4.6px;background:repeating-linear-gradient(180deg,#777 0,#777 0.7px,#aaa 0.7px,#aaa 1.15px)"></div>
</div>
</div></body></html>
